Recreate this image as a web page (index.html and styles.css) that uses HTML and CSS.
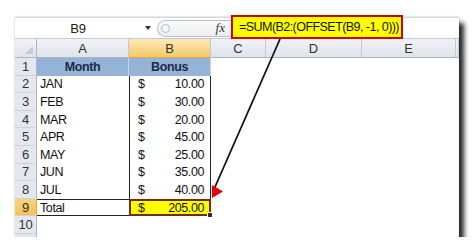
FILE: index.html
```html
<!DOCTYPE html>
<html>
<head>
<meta charset="utf-8">
<link rel="stylesheet" href="styles.css">
</head>
<body>
<div class="window">
  <div class="fbar">
    <div class="namebox"><span class="nb-text">B9</span><span class="nb-arrow"></span></div>
    <div class="fx-area">
      <div class="pill"><span class="grip"></span><span class="fx"><i>f</i>x</span></div>
    </div>
    <div class="formula"><span class="hl">=SUM(B2:(OFFSET(B9, -1, 0)))</span></div>
  </div>
  <div class="sheet">
    <div class="corner"></div><div class="ch">A</div><div class="ch sel">B</div><div class="ch">C</div><div class="ch">D</div><div class="ch">E</div><div class="ch"></div>

    <div class="rh">1</div><div class="c hdr">Month</div><div class="c hdr">Bonus</div><div class="c"></div><div class="c"></div><div class="c"></div><div class="c"></div>
    <div class="rh">2</div><div class="c">JAN</div><div class="c money"><span>$</span><span>10.00</span></div><div class="c"></div><div class="c"></div><div class="c"></div><div class="c"></div>
    <div class="rh">3</div><div class="c">FEB</div><div class="c money"><span>$</span><span>30.00</span></div><div class="c"></div><div class="c"></div><div class="c"></div><div class="c"></div>
    <div class="rh">4</div><div class="c">MAR</div><div class="c money"><span>$</span><span>20.00</span></div><div class="c"></div><div class="c"></div><div class="c"></div><div class="c"></div>
    <div class="rh">5</div><div class="c">APR</div><div class="c money"><span>$</span><span>45.00</span></div><div class="c"></div><div class="c"></div><div class="c"></div><div class="c"></div>
    <div class="rh">6</div><div class="c">MAY</div><div class="c money"><span>$</span><span>25.00</span></div><div class="c"></div><div class="c"></div><div class="c"></div><div class="c"></div>
    <div class="rh">7</div><div class="c">JUN</div><div class="c money"><span>$</span><span>35.00</span></div><div class="c"></div><div class="c"></div><div class="c"></div><div class="c"></div>
    <div class="rh">8</div><div class="c">JUL</div><div class="c money"><span>$</span><span>40.00</span></div><div class="c"></div><div class="c"></div><div class="c"></div><div class="c"></div>
    <div class="rh sel">9</div><div class="c total">Total</div><div class="c money sum"><span>$</span><span>205.00</span></div><div class="c"></div><div class="c"></div><div class="c"></div><div class="c"></div>
    <div class="rh">10</div><div class="c"></div><div class="c"></div><div class="c"></div><div class="c"></div><div class="c"></div><div class="c"></div>
    <div class="rh"></div><div class="c"></div><div class="c"></div><div class="c"></div><div class="c"></div><div class="c"></div><div class="c"></div>
  </div>
  <svg class="overlay" width="444" height="220" viewBox="0 0 444 220">
    <line x1="265" y1="22" x2="200" y2="170" stroke="#111" stroke-width="1.8"/>
    <polygon points="197,168 197,181 208,174.5" fill="#e00000"/>
  </svg>
</div>
</body>
</html>
```

FILE: styles.css
```css
body {
  margin: 0;
  background: #ffffff;
  font-family: "Liberation Sans", Arial, sans-serif;
  color: #111;
}

.window {
  position: relative;
  margin: 17px 0 0 15px;
  width: 444px;
  height: 220px;
  background: #ffffff;
  box-shadow: 5px 6px 5px rgba(0, 0, 0, 0.85), 0 0 2px rgba(0, 0, 0, 0.25);
  display: flex;
  flex-direction: column;
}

.fbar {
  display: flex;
  height: 22px;
  box-sizing: border-box;
  border-top: 1px solid #d4d8de;
  border-bottom: 1px solid #c3c9d3;
  flex-shrink: 0;
}

.namebox {
  width: 137px;
  display: flex;
  align-items: center;
  font-size: 13px;
  letter-spacing: -0.3px;
  color: #222;
}

.nb-text {
  width: 126px;
  text-align: center;
}

.nb-arrow {
  width: 0;
  height: 0;
  border-left: 3px solid transparent;
  border-right: 3px solid transparent;
  border-top: 4px solid #333;
  margin-left: 4px;
}

.fx-area {
  width: 79px;
  display: flex;
  align-items: center;
}

.pill {
  margin-left: 5px;
  flex: 1;
  height: 17px;
  box-sizing: border-box;
  border: 1px solid #b9c0ca;
  border-right: none;
  border-radius: 9px 0 0 9px;
  background: linear-gradient(#fbfbfc, #eceef1);
  display: flex;
  align-items: center;
}

.grip {
  width: 7px;
  height: 7px;
  border-radius: 50%;
  border: 1px solid #b3b9c2;
  background: #f6f6f6;
  margin-left: 3px;
}

.fx {
  margin-left: auto;
  margin-right: 6px;
  font-family: "Liberation Serif", "Times New Roman", serif;
  font-style: italic;
  font-size: 13px;
  color: #333;
}

.formula {
  flex: 1;
  display: flex;
  align-items: flex-start;
}

.hl {
  margin-top: -3px;
  height: 24px;
  width: 172px;
  box-sizing: border-box;
  border: 2px solid #d40000;
  background: #ffff00;
  font-size: 12.5px;
  letter-spacing: -0.55px;
  padding-left: 6px;
  display: flex;
  align-items: center;
  color: #111;
  position: relative;
  z-index: 2;
}

.sheet {
  flex: 1;
  overflow: hidden;
  display: grid;
  grid-template-columns: 22px 92px 82px 55px 96px 94px 3px;
  grid-template-rows: 19px repeat(11, 17.6px);
  font-size: 12.5px;
  letter-spacing: -0.4px;
}

.corner {
  background: linear-gradient(#f1f3f6, #dfe4ea);
  border-right: 1px solid #aeb6c2;
  border-bottom: 1px solid #aeb6c2;
  position: relative;
}

.corner::after {
  content: "";
  position: absolute;
  right: 3px;
  bottom: 3px;
  width: 0;
  height: 0;
  border-left: 8px solid transparent;
  border-bottom: 8px solid #c6cbd2;
}

.ch {
  background: linear-gradient(#f1f3f6, #dfe4ea);
  border-right: 1px solid #c3c9d3;
  border-bottom: 1px solid #aeb6c2;
  display: flex;
  align-items: center;
  justify-content: center;
  color: #333;
  font-size: 13px;
  letter-spacing: 0;
}

.ch.sel {
  background: linear-gradient(#fce9b8, #f5c868);
  border-bottom-color: #e2a83a;
}

.rh {
  background: #e4e8ee;
  border-right: 1px solid #aeb6c2;
  border-bottom: 1px solid #cdd2d9;
  display: flex;
  align-items: center;
  justify-content: center;
  color: #333;
  font-size: 13px;
  letter-spacing: -0.3px;
}

.rh.sel {
  background: linear-gradient(#f8d47e, #f3c25a);
  border-right-color: #e2a83a;
}

.c {
  display: flex;
  align-items: center;
  padding: 0 3px;
  white-space: nowrap;
  box-sizing: border-box;
  min-width: 0;
}

.hdr {
  background: #95b3d7;
  justify-content: center;
  font-weight: bold;
  color: #1b2a47;
  border-right: 1px solid #c6d4e6;
}

.money {
  justify-content: space-between;
  padding: 0 6px 0 8px;
  border-left: 1px solid #222;
  border-right: 1px solid #222;
}

.total {
  border-top: 1px solid #222;
  border-bottom: 1px solid #222;
}

.sum {
  background: #ffff00;
  border: 2px solid #7b2a12;
  padding: 0 5px 0 7px;
  position: relative;
  overflow: visible;
}

.sum::after {
  content: "";
  position: absolute;
  right: -4px;
  bottom: -4px;
  width: 4px;
  height: 4px;
  background: #3a2a20;
  border: 1px solid #fff;
}

.overlay {
  position: absolute;
  left: 0;
  top: 0;
  pointer-events: none;
  overflow: visible;
}
```
